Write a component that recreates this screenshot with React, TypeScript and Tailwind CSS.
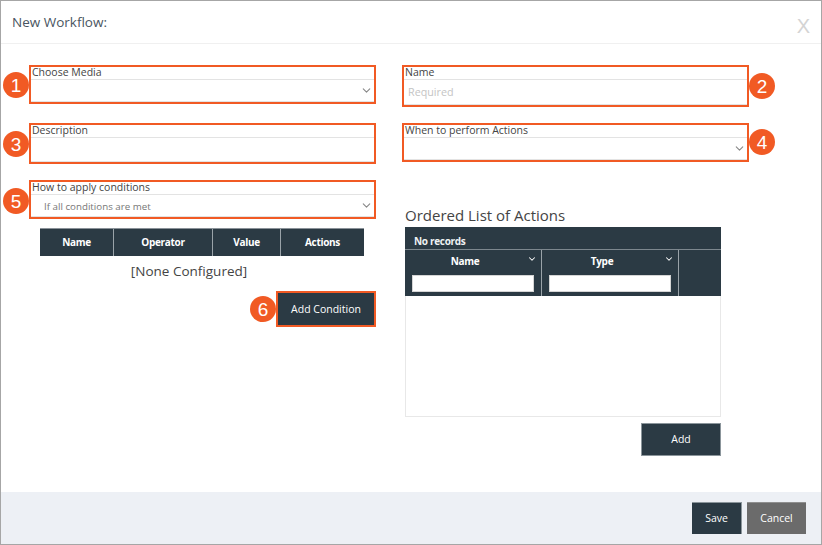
import { ChevronDown } from "lucide-react";

function Badge({ n, className }: { n: number; className: string }) {
  return (
    <span
      className={`absolute flex h-[26px] w-[26px] items-center justify-center rounded-full bg-[#f15a24] text-[19px] leading-none text-white font-['Liberation_Sans',sans-serif] ${className}`}
    >
      {n}
    </span>
  );
}

function Field({
  label,
  n,
  badge,
  height,
  select,
  value,
  placeholder,
}: {
  label: string;
  n: number;
  badge: string;
  height: string;
  select?: boolean;
  value?: string;
  placeholder?: string;
}) {
  return (
    <div className={`relative w-[347px] border-2 border-[#f15a24] ${height}`}>
      <div className="h-[12px] pl-[1px] text-[10.5px] leading-[10px] text-[#444]">{label}</div>
      <div className="flex h-[calc(100%-12px)] items-center justify-between border-y border-[#e3e3e3] pl-[13px] pr-[1px]">
        {value && <span className="pt-[3px] text-[9.75px] text-[#777]">{value}</span>}
        {placeholder && <span className="-ml-[9px] text-[10.75px] text-[#c4c4c4]">{placeholder}</span>}
        {select && <ChevronDown className="ml-auto h-[13px] w-[13px] text-[#888]" strokeWidth={2} />}
      </div>
      <Badge n={n} className={badge} />
    </div>
  );
}

function HeadCell({ label }: { label: string }) {
  return (
    <div className="relative flex flex-col items-center border-r border-[#9aa3a9] pt-[3px]">
      <div className="pr-[16px] text-[10px] font-bold leading-[16px] tracking-[-0.03em] text-white">{label}</div>
      <ChevronDown className="absolute right-[4px] top-[4px] h-[10px] w-[10px] text-white" strokeWidth={2.5} />
      <div className="mt-[6px] h-[17px] w-[122px] border border-[#d5d5d5] bg-white" />
    </div>
  );
}

export default function App() {
  return (
    <div className="flex h-[545px] w-[822px] flex-col border border-[#a6a6a6] bg-white font-['Open_Sans',sans-serif] text-[#444]">
      <header className="flex h-[43px] shrink-0 items-center justify-between border-b border-[#f0f0f0] pl-[11px] pr-[11px]">
        <h1 className="text-[13.5px] text-[#4a5561]">New Workflow:</h1>
        <span className="mt-[7px] font-['Liberation_Sans',sans-serif] text-[20px] text-[#d4d4d4]">X</span>
      </header>

      <main className="flex flex-1 gap-[26px] pl-[28px] pt-[21px]">
        <section className="flex w-[347px] flex-col">
          <Field label="Choose Media" n={1} badge="-left-[28px] top-[5px]" height="h-[39px]" select />
          <div className="h-[19px]" />
          <Field label="Description" n={3} badge="-left-[28px] top-[6px]" height="h-[41px]" />
          <div className="h-[16px]" />
          <Field label="How to apply conditions" n={5} badge="-left-[28px] top-[6px]" height="h-[39px]" select value="If all conditions are met" />

          <div className="ml-[11px] mt-[9px] grid h-[28px] w-[324px] grid-cols-[74px_99px_68px_83px] border-t border-[#8a9299] bg-[#2b3a44] text-center text-[10px] font-bold leading-[27px] tracking-[-0.03em] text-white">
            <div className="border-r border-[#9aa3a9]">Name</div>
            <div className="border-r border-[#9aa3a9]">Operator</div>
            <div className="border-r border-[#9aa3a9]">Value</div>
            <div>Actions</div>
          </div>
          <p className="mt-[5px] w-[320px] text-center text-[13.5px] leading-[20px] text-[#444]">[None Configured]</p>

          <div className="relative ml-auto mt-[10px] flex h-[36px] w-[100px] items-center justify-center border-2 border-[#f15a24] bg-[#2b3a44] pt-[1px] text-[10.5px] text-white">
            Add Condition
            <Badge n={6} className="-left-[28px] top-[3px]" />
          </div>
        </section>

        <section className="flex w-[347px] flex-col">
          <Field label="Name" n={2} badge="-right-[28px] top-[6px]" height="h-[42px]" placeholder="Required" />
          <div className="h-[16px]" />
          <Field label="When to perform Actions" n={4} badge="-right-[28px] top-[4px]" height="h-[39px]" select />

          <h2 className="ml-[3px] mt-[43px] mb-[1px] text-[15px] leading-[21px] text-[#444]">Ordered List of Actions</h2>

          <div className="ml-[3px] flex h-[190px] w-[316px] flex-col border-x border-b border-[#e8e8e8]">
            <div className="-mx-[1px] flex h-[23px] shrink-0 items-center border-b border-[#7d878e] bg-[#2b3a44] pl-[9px] pt-[6px] text-[10px] font-bold tracking-[-0.03em] text-[#eef1f3]">
              No records
            </div>
            <div className="-mx-[1px] grid h-[46px] shrink-0 grid-cols-[137px_137px_1fr] bg-[#2b3a44]">
              <HeadCell label="Name" />
              <HeadCell label="Type" />
              <div />
            </div>
            <div className="flex-1 bg-white" />
          </div>

          <button className="ml-[239px] mt-[6px] h-[33px] w-[80px] border border-[#8b959b] bg-[#2b3a44] text-[10.5px] text-white">
            Add
          </button>
        </section>
      </main>

      <footer className="flex h-[52px] shrink-0 items-start justify-end gap-[5px] bg-[#edf0f5] pr-[15px] pt-[10px]">
        <button className="h-[32px] w-[50px] border-t border-r border-[#8b959b] bg-[#2b3a44] text-[10.5px] text-white">Save</button>
        <button className="h-[32px] w-[59px] border-t border-[#8f8f8f] bg-[#6b6b6b] text-[10.5px] text-white">Cancel</button>
      </footer>
    </div>
  );
}
